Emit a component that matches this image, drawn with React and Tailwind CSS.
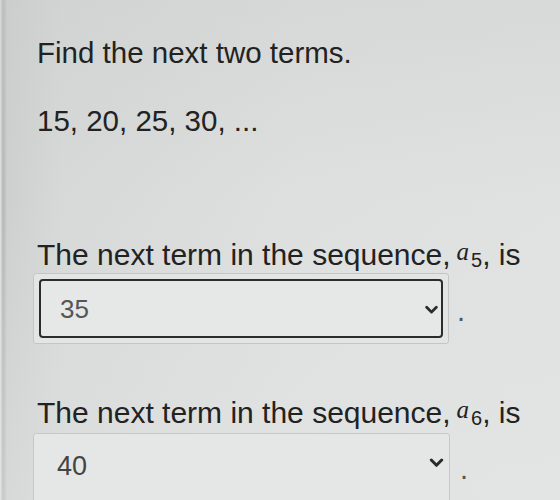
import React from "react";

function Chevron({ className }) {
  return (
    <svg viewBox="0 0 14 10" className={className} fill="none">
      <path d="M1.8 2 L7 7.3 L12.2 2" stroke="#2a2a2a" strokeWidth="3" strokeLinecap="round" strokeLinejoin="round" />
    </svg>
  );
}

function Term({ n }) {
  return (
    <span className="whitespace-nowrap leading-none">
      <span className="font-['Liberation_Serif',serif] italic text-[25px] leading-none align-[5px] ml-[6px]">a</span>
      <span className="text-[20px] leading-none align-[-2px] ml-[2px]">{n}</span>
    </span>
  );
}

export default function App() {
  return (
    <div className="w-[560px] h-[500px] overflow-hidden bg-[linear-gradient(90deg,#e4e6e5_0px,#b4b6b5_3px,#cdd0cf_7px,#d6d9d8_60px,#dde0df_300px,#dfe2e0_560px)] font-['Liberation_Sans',Arial,sans-serif] text-[#222]">
      <div className="h-full bg-[linear-gradient(180deg,rgba(200,202,201,0.35)_0px,rgba(220,223,222,0)_200px,rgba(232,234,233,0.35)_500px)] pl-[33px] pt-[36px]">
        <p className="ml-[4px] text-[29.5px] leading-[34px]">Find the next two terms.</p>
        <p className="ml-[4px] mt-[34px] text-[29.5px] leading-[34px]">15, 20, 25, 30, ...</p>

        <p className="ml-[4px] mt-[100px] h-[34px] text-[30px] leading-[34px]">
          The next term in the sequence,<Term n="5" />, is
        </p>
        <div className="flex items-end mt-[1px]">
          <div className="w-[416px] h-[71px] border border-[#c3c6c5] rounded-[3px] p-[5px] bg-[#e2e5e4]">
            <div className="h-full border-2 border-[#2c2c2c] rounded-[4px] bg-[#e6e8e7] flex items-center justify-between pl-[19px] pr-[3px]">
              <span className="text-[26px] leading-none text-[#555]">35</span>
              <Chevron className="w-[13px] h-[10px] mt-[2px]" />
            </div>
          </div>
          <span className="ml-[8px] mb-[18px] text-[29px] leading-none text-[#555]">.</span>
        </div>

        <p className="ml-[4px] mt-[52px] h-[34px] text-[30px] leading-[34px]">
          The next term in the sequence,<Term n="6" />, is
        </p>
        <div className="flex items-start mt-[3px]">
          <div className="w-[417px] h-[80px] border border-[#c6c8c7] rounded-[3px] bg-[#e5e7e6] flex items-start justify-between pl-[23px] pr-[5px] pt-[19px]">
            <span className="text-[27px] leading-none text-[#444]">40</span>
            <Chevron className="w-[15px] h-[10px] mt-[5px]" />
          </div>
          <span className="ml-[10px] mt-[22px] text-[29px] leading-none text-[#555]">.</span>
        </div>
      </div>
    </div>
  );
}
